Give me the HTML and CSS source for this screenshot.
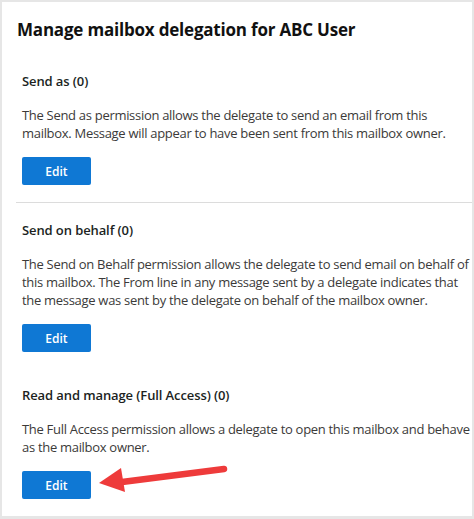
FILE: index.html
```html
<!DOCTYPE html>
<html lang="en">
<head>
<meta charset="utf-8">
<title>Manage mailbox delegation</title>
<link rel="stylesheet" href="styles.css">
</head>
<body>
<div class="panel">
  <h1 class="title">Manage mailbox delegation for ABC User</h1>

  <section class="perm">
    <h2 class="perm-name">Send as (0)</h2>
    <p class="perm-desc">The Send as permission allows the delegate to send an email from this<br>mailbox. Message will appear to have been sent from this mailbox owner.</p>
    <button class="edit-btn" type="button">Edit</button>
  </section>

  <section class="perm perm-split">
    <h2 class="perm-name">Send on behalf (0)</h2>
    <p class="perm-desc">The Send on Behalf permission allows the delegate to send email on behalf of<br>this mailbox. The From line in any message sent by a delegate indicates that<br>the message was sent by the delegate on behalf of the mailbox owner.</p>
    <button class="edit-btn" type="button">Edit</button>
  </section>

  <section class="perm perm-last">
    <h2 class="perm-name">Read and manage (Full Access) (0)</h2>
    <p class="perm-desc">The Full Access permission allows a delegate to open this mailbox and behave<br>as the mailbox owner.</p>
    <button class="edit-btn" type="button">Edit</button>
  </section>

  <!-- callout arrow pointing at the Full Access edit button -->
  <svg class="callout" width="140" height="40" viewBox="0 0 140 40" aria-hidden="true">
    <line x1="24" y1="19" x2="126" y2="6" stroke="#ee3b3b" stroke-width="6.5" stroke-linecap="round"/>
    <polygon points="1,20 23,5 27,29" fill="#ee3b3b"/>
  </svg>
</div>
</body>
</html>
```

FILE: styles.css
```css
html, body {
  margin: 0;
  padding: 0;
}

body {
  background: #e6e6e6;
  padding: 2px 2px 3px 2px;
  width: 470px;
  height: 514px;
  font-family: "Open Sans", "Noto Sans", sans-serif;
  color: #323130;
}

.panel {
  position: relative;
  background: #ffffff;
  height: 514px;
  padding-top: 16px;
  box-sizing: border-box;
  overflow: hidden;
}

.title {
  margin: 0 0 0 15px;
  font-size: 17px;
  line-height: 24px;
  font-weight: 700;
  color: #111111;
  letter-spacing: -0.2px;
}

.perm {
  margin-left: 14px;
  padding: 30px 0 0 6px;
}

.perm-split {
  margin-top: 17px;
  border-top: 1px solid #dcdcdc;
  padding-top: 18px;
}

.perm-last {
  padding-top: 34px;
}

.perm-name {
  margin: 0;
  font-size: 13px;
  line-height: 18px;
  font-weight: 600;
  color: #201f1e;
  letter-spacing: -0.1px;
}

.perm-desc {
  margin: 16px 0 0 0;
  font-size: 13px;
  line-height: 18px;
  color: #3b3a39;
  letter-spacing: -0.3px;
  white-space: nowrap;
}

.edit-btn {
  display: block;
  margin-top: 15px;
  width: 69px;
  height: 28px;
  border: none;
  border-radius: 2px;
  background: #0f78d4;
  color: #ffffff;
  font-family: inherit;
  font-size: 12px;
  font-weight: 600;
  padding: 0;
}

.callout {
  position: absolute;
  left: 96px;
  top: 461px;
}
```
